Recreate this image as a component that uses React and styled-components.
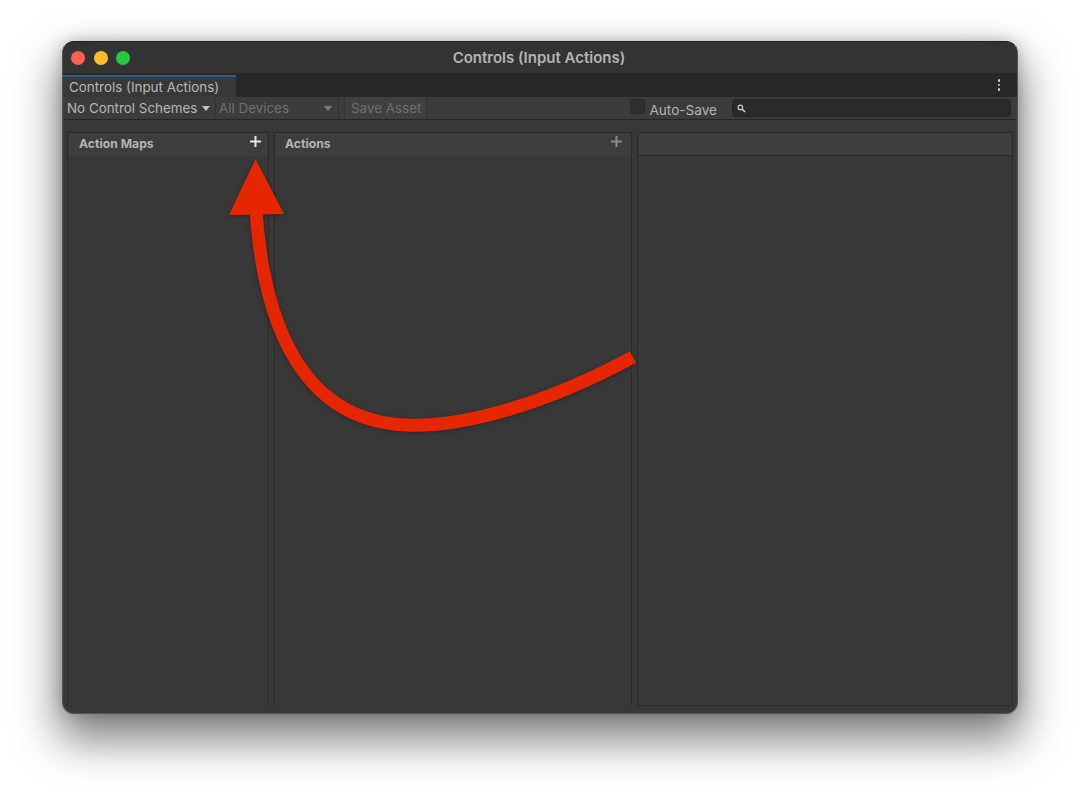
import React from "react";
import styled, { createGlobalStyle } from "styled-components";

const Global = createGlobalStyle`
  html, body { margin: 0; padding: 0; background: #fff; }
  body { font-family: Inter, "Liberation Sans", sans-serif; }
`;

const Page = styled.div`
  width: 1080px;
  height: 796px;
  padding: 41px 62px 82px;
  box-sizing: border-box;
  overflow: hidden;
`;

const Window = styled.div`
  position: relative;
  height: 100%;
  display: flex;
  flex-direction: column;
  box-sizing: border-box;
  border-radius: 12px;
  border: 1px solid #555555;
  border-top-color: #1e1e1e;
  background: #383838;
  box-shadow: 0 22px 44px 4px rgba(0, 0, 0, 0.5), 0 0 14px rgba(0, 0, 0, 0.22);
`;

const TitleBar = styled.div`
  position: relative;
  height: 31px;
  flex: none;
  background: #333333;
  border-radius: 11px 11px 0 0;
  display: flex;
  align-items: center;
  justify-content: center;
`;

const Lights = styled.div`
  position: absolute;
  left: 8px;
  top: 9px;
  display: flex;
  gap: 8.5px;
`;

const Light = styled.span`
  width: 14px;
  height: 14px;
  border-radius: 50%;
  background: ${(p) => p.$color};
`;

const Title = styled.div`
  color: #b4b4b4;
  font-size: 15px;
  font-weight: 600;
  line-height: 18px;
  margin: 0 2px 0 0;
`;

const TabStrip = styled.div`
  height: 24px;
  flex: none;
  background: #282828;
  display: flex;
  justify-content: space-between;
  align-items: stretch;
`;

const Tab = styled.div`
  width: 173px;
  margin-top: 2px;
  box-sizing: border-box;
  border-top: 2px solid #2c5d87;
  background: #383838;
  color: #b8b8b8;
  font-size: 13.4px;
  padding: 1px 0 0 6px;
  line-height: 18px;
  white-space: nowrap;
`;

const MenuDots = styled.div`
  display: flex;
  flex-direction: column;
  justify-content: center;
  gap: 2px;
  margin-right: 17px;
`;

const Dot = styled.span`
  width: 2.4px;
  height: 2.4px;
  border-radius: 50%;
  background: #d2d2d2;
`;

const Toolbar = styled.div`
  height: 23px;
  flex: none;
  box-sizing: border-box;
  display: flex;
  align-items: stretch;
  background: #3c3c3c;
  border-bottom: 1px solid #252525;
  padding-left: 4px;
`;

const Dropdown = styled.div`
  width: ${(p) => p.$width}px;
  flex: none;
  box-sizing: border-box;
  display: flex;
  align-items: center;
  justify-content: space-between;
  padding: 0 ${(p) => p.$padRight}px 0 0;
  font-size: 13.4px;
  color: ${(p) => (p.$disabled ? "#707070" : "#b8b8b8")};
  white-space: nowrap;
`;

const Caret = styled.span`
  width: 0;
  height: 0;
  border-left: 4.5px solid transparent;
  border-right: 4.5px solid transparent;
  border-top: 5px solid ${(p) => (p.$disabled ? "#7a7a7a" : "#c4c4c4")};
`;

const Divider = styled.div`
  width: 1px;
  flex: none;
  background: #303030;
  margin-right: ${(p) => p.$gap || 0}px;
`;

const SaveButton = styled.div`
  width: 83px;
  flex: none;
  box-sizing: border-box;
  display: flex;
  align-items: center;
  padding-left: 6px;
  font-size: 13.4px;
  color: #6f6f6f;
  background: #404040;
  border-left: 1px solid #333;
  border-right: 1px solid #333;
  white-space: nowrap;
`;

const Spacer = styled.div`
  flex: 1;
`;

const AutoSave = styled.div`
  display: flex;
  align-items: flex-start;
  gap: 4px;
  padding-top: 2px;
  margin-right: 15px;
`;

const CheckBox = styled.div`
  width: 15px;
  height: 15px;
  box-sizing: border-box;
  border-radius: 3px;
  background: #2f2f2f;
  border: 1px solid #2a2a2a;
`;

const AutoLabel = styled.span`
  color: #b4b4b4;
  font-size: 13.6px;
  line-height: 17px;
  padding-top: 3px;
`;

const Search = styled.div`
  width: 279px;
  height: 18px;
  align-self: center;
  margin-right: 6px;
  box-sizing: border-box;
  border-radius: 4px;
  background: #2a2a2a;
  border: 1px solid #232323;
  display: flex;
  align-items: center;
  padding-left: 4px;
`;

const Panels = styled.div`
  flex: 1;
  min-height: 0;
  display: flex;
  gap: 5px;
  padding: 12px 4px 7px 4px;
`;

const Panel = styled.div`
  width: ${(p) => (p.$width ? `${p.$width}px` : "auto")};
  flex: ${(p) => (p.$width ? "none" : "1")};
  box-sizing: border-box;
  display: flex;
  flex-direction: column;
  border: 1px solid #2b2b2b;
  border-bottom: ${(p) => (p.$boxed ? "1px solid #2b2b2b" : "none")};
`;

const PanelHeader = styled.div`
  height: 23px;
  flex: none;
  box-sizing: border-box;
  display: flex;
  align-items: center;
  justify-content: space-between;
  padding: 0 ${(p) => p.$right || 7}px 2px ${(p) => p.$left || 11}px;
  background: #3d3d3d;
  border-bottom: ${(p) => (p.$line ? "1px solid #2b2b2b" : "none")};
`;

const HeaderText = styled.span`
  color: #b4b4b4;
  font-size: 12.2px;
  font-weight: 700;
`;

const AddIcon = styled.svg`
  width: 11px;
  height: 11px;
  margin-top: -4px;
`;

const ArrowLayer = styled.svg`
  position: absolute;
  left: -63px;
  top: -42px;
  width: 1080px;
  height: 796px;
  pointer-events: none;
  filter: drop-shadow(0 1px 2px rgba(0, 0, 0, 0.3));
`;

const Plus = ({ color }) => (
  <AddIcon viewBox="0 0 11 11">
    <path d="M5.5 0v11M0 5.5h11" stroke={color} strokeWidth="2" fill="none" />
  </AddIcon>
);

export default function App() {
  return (
    <Page>
      <Global />
      <Window>
        <TitleBar>
          <Lights>
            <Light $color="#ff5f57" />
            <Light $color="#febc2e" />
            <Light $color="#28c840" />
          </Lights>
          <Title>Controls (Input Actions)</Title>
        </TitleBar>
        <TabStrip>
          <Tab>Controls (Input Actions)</Tab>
          <MenuDots>
            <Dot />
            <Dot />
            <Dot />
          </MenuDots>
        </TabStrip>
        <Toolbar>
          <Dropdown $width={148} $padRight={5}>
            No Control Schemes
            <Caret />
          </Dropdown>
          <Divider $gap={3} />
          <Dropdown $width={119} $padRight={6} $disabled>
            All Devices
            <Caret $disabled />
          </Dropdown>
          <Divider $gap={5} />
          <SaveButton>Save Asset</SaveButton>
          <Spacer />
          <AutoSave>
            <CheckBox />
            <AutoLabel>Auto-Save</AutoLabel>
          </AutoSave>
          <Search>
            <svg width="9" height="9" viewBox="0 0 9 9">
              <circle cx="3.4" cy="3.4" r="2.3" stroke="#d0d0d0" strokeWidth="1.2" fill="none" />
              <path d="M5.2 5.2L8 8" stroke="#d0d0d0" strokeWidth="1.6" />
            </svg>
          </Search>
        </Toolbar>
        <Panels>
          <Panel $width={202}>
            <PanelHeader>
              <HeaderText>Action Maps</HeaderText>
              <Plus color="#e8e8e8" />
            </PanelHeader>
          </Panel>
          <Panel $width={358}>
            <PanelHeader $left={10} $right={9}>
              <HeaderText>Actions</HeaderText>
              <Plus color="#8a8a8a" />
            </PanelHeader>
          </Panel>
          <Panel $boxed>
            <PanelHeader $line />
          </Panel>
        </Panels>
        <ArrowLayer viewBox="0 0 1080 796">
          <path
            d="M633 357 C 550 402, 465 428, 405 425 C 305 420, 264 330, 256 210"
            stroke="#e62600"
            strokeWidth="13"
            fill="none"
          />
          <polygon points="255.5,159 229,215 284,214" fill="#e62600" />
        </ArrowLayer>
      </Window>
    </Page>
  );
}
